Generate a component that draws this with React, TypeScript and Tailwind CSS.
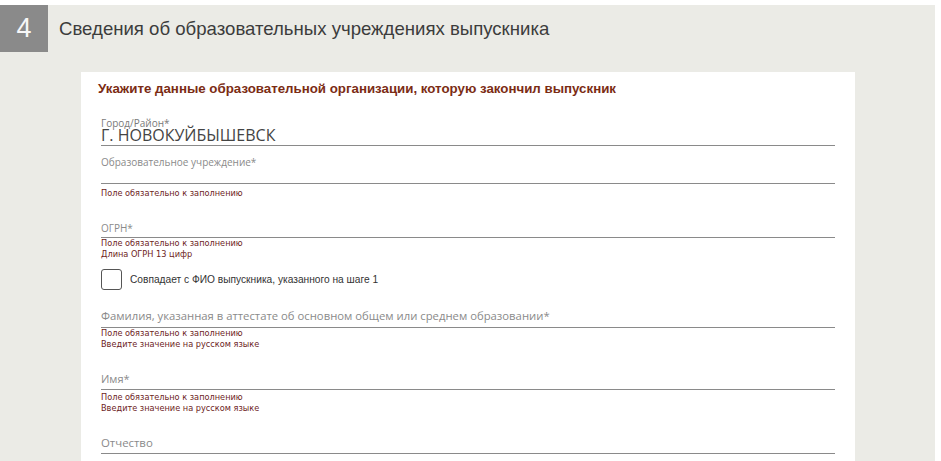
import React from "react";

const OS = { fontFamily: '"Open Sans", "Noto Sans", sans-serif' };
const LS = { fontFamily: '"Liberation Sans", Arial, sans-serif' };
const DJ = { fontFamily: '"DejaVu Sans", Verdana, sans-serif' };

function Errors({ lines, mt }: { lines: string[]; mt: string }) {
  return (
    <div className={`${mt} flex flex-col`} style={DJ}>
      {lines.map((l) => (
        <div key={l} className="text-[8.2px] leading-[11px] text-[#6d1d1d] whitespace-nowrap">
          {l}
        </div>
      ))}
    </div>
  );
}

export default function App() {
  return (
    <div className="w-[941px] h-[461px] overflow-hidden bg-white pt-[5px] pr-[6px]">
      <div className="h-[456px] bg-[#ebebe6] flex flex-col">
        <div className="flex items-center h-[47px] shrink-0">
          <div
            className="w-[48px] h-full bg-[#8a8a8a] flex items-center justify-center text-[27px] text-[#f7f7f7]"
            style={LS}
          >
            4
          </div>
          <div className="ml-[11px] text-[18.6px] text-[#3c3c3c] whitespace-nowrap" style={LS}>
            Сведения об образовательных учреждениях выпускника
          </div>
        </div>

        <div className="ml-[81px] mt-[20px] w-[774px] flex-1 bg-white pt-[9px] pl-[17px] pr-[20px]">
          <div className="text-[13.3px] leading-[15px] font-bold text-[#7b2c14] whitespace-nowrap" style={LS}>
            Укажите данные образовательной организации, которую закончил выпускник
          </div>

          <div className="pl-[3px] flex flex-col">
            {/* Город */}
            <div className="mt-[23px] border-b border-[#8a8a8a] pb-[4px] flex flex-col" style={OS}>
              <div className="text-[10px] leading-[8px] text-[#7a7a7a]">Город/Район*</div>
              <div className="mt-[2px] text-[16px] leading-[12px] text-[#444] whitespace-nowrap">Г. НОВОКУЙБЫШЕВСК</div>
            </div>

            {/* Образовательное учреждение */}
            <div className="mt-[10px] border-b border-[#8a8a8a] pb-[15px]" style={OS}>
              <div className="text-[10px] leading-[12px] text-[#8a8a8a]">Образовательное учреждение*</div>
            </div>
            <Errors mt="mt-[4px]" lines={["Поле обязательно к заполнению"]} />

            {/* ОГРН */}
            <div className="mt-[23px] border-b border-[#8a8a8a] pb-[3px]" style={OS}>
              <div className="text-[10px] leading-[12px] text-[#8a8a8a]">ОГРН*</div>
            </div>
            <Errors mt="mt-[0px]" lines={["Поле обязательно к заполнению", "Длина ОГРН 13 цифр"]} />

            {/* Checkbox */}
            <div className="mt-[9px] flex items-center gap-[8px]">
              <div className="w-[21px] h-[21px] rounded-[3px] border border-[#555] bg-white" />
              <div className="text-[10.2px] text-[#333] whitespace-nowrap" style={LS}>
                Совпадает с ФИО выпускника, указанного на шаге 1
              </div>
            </div>

            {/* Фамилия */}
            <div className="mt-[20px] border-b border-[#8a8a8a] pb-[5px]" style={OS}>
              <div className="text-[11.3px] leading-[12px] text-[#8a8a8a] whitespace-nowrap">
                Фамилия, указанная в аттестате об основном общем или среднем образовании*
              </div>
            </div>
            <Errors mt="mt-[0px]" lines={["Поле обязательно к заполнению", "Введите значение на русском языке"]} />

            {/* Имя */}
            <div className="mt-[23px] border-b border-[#8a8a8a] pb-[4px]" style={OS}>
              <div className="text-[11px] leading-[12px] text-[#8a8a8a]">Имя*</div>
            </div>
            <Errors mt="mt-[2px]" lines={["Поле обязательно к заполнению", "Введите значение на русском языке"]} />

            {/* Отчество */}
            <div className="mt-[23px] border-b border-[#8a8a8a] pb-[4px]" style={OS}>
              <div className="text-[11.4px] leading-[12px] text-[#8a8a8a]">Отчество</div>
            </div>
          </div>
        </div>
      </div>
    </div>
  );
}
